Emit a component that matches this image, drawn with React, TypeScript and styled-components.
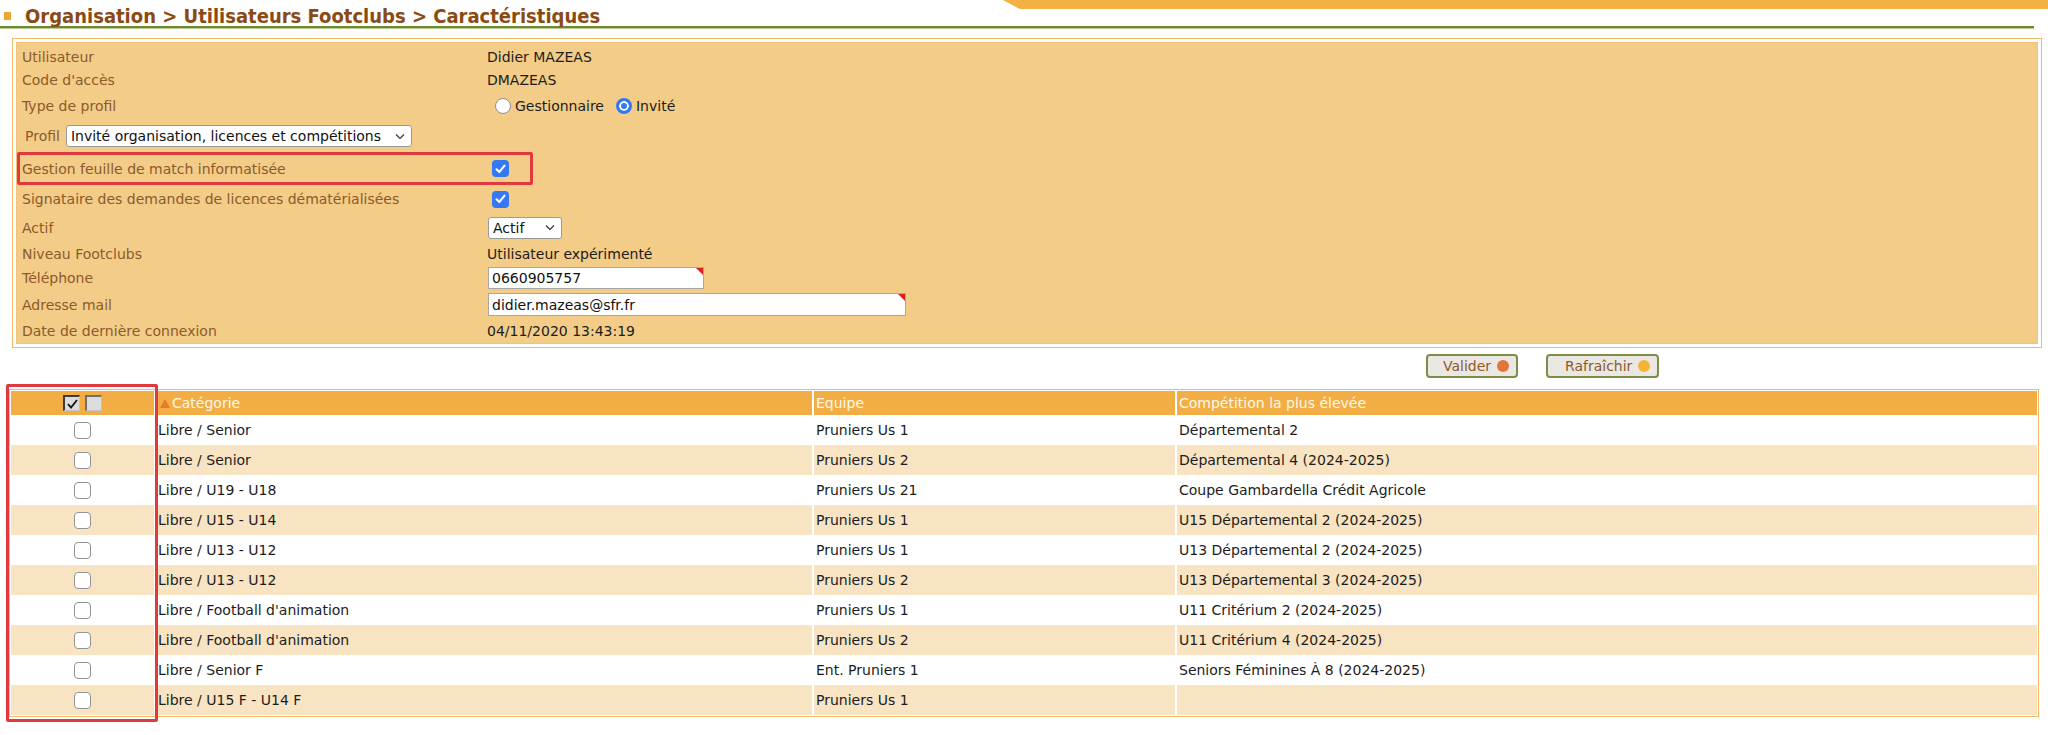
import React from 'react'
import styled, { createGlobalStyle } from 'styled-components'

const GlobalStyle = createGlobalStyle`
  html, body {
    margin: 0;
    padding: 0;
    background: #fff;
  }
  body {
    font-family: "DejaVu Sans", Verdana, sans-serif;
    font-size: 14px;
    color: #1c1c1c;
  }
`

const Page = styled.div`
  width: 2048px;
  height: 735px;
  overflow: hidden;
`

/* ---------- page heading ---------- */

const HeaderBar = styled.div`
  display: flex;
  justify-content: space-between;
  align-items: flex-start;
  height: 26px;
`

const Title = styled.h1`
  margin: 0;
  padding: 6px 0 0 4px;
  display: flex;
  align-items: center;
  font-family: "DejaVu Sans Condensed", "DejaVu Sans", sans-serif;
  font-weight: bold;
  font-size: 20px;
  line-height: 20px;
  color: #8a4a12;
  white-space: nowrap;

  &::before {
    content: '';
    width: 7px;
    height: 8px;
    margin-right: 14px;
    background: #f0a531;
  }
`

const Tab = styled.div`
  width: 1045px;
  height: 9px;
  flex-shrink: 0;
  background: #f2b142;
  clip-path: polygon(0 0, 100% 0, 100% 100%, 17px 100%);
`

const GreenRule = styled.div`
  height: 2px;
  margin-right: 14px;
  background: #6c8a2c;
  border-bottom: 1px solid #bccb94;
`

/* ---------- user panel ---------- */

const Panel = styled.div`
  margin: 9px 6px 0 12px;
  padding: 3px;
  border: 1px solid #f3b868;
  background: #fff;
`

const PanelInner = styled.div`
  padding-top: 2px;
  border: 1px solid #f3c27a;
  background: #f3cc88;
`

const FieldRow = styled.div<{ $h: number }>`
  display: grid;
  grid-template-columns: 470px 1fr;
  align-items: center;
  height: ${p => p.$h}px;
`

const FlaggedRow = styled(FieldRow)`
  box-sizing: border-box;
  width: 516px;
  grid-template-columns: 467px 1fr;
  border: 3px solid #e0393e;
  border-radius: 2px;
`

const Label = styled.span<{ $pad?: number }>`
  padding-left: ${p => p.$pad ?? 5}px;
  color: #8d5a2a;
  white-space: nowrap;
`

const Value = styled.div`
  display: flex;
  align-items: center;
  white-space: nowrap;
`

const ProfileRow = styled.div<{ $h: number }>`
  display: flex;
  align-items: center;
  gap: 6px;
  height: ${p => p.$h}px;
  padding-left: 8px;
`

const SelectBox = styled.div<{ $w: number; $h: number; $ml?: number }>`
  box-sizing: border-box;
  display: flex;
  align-items: center;
  justify-content: space-between;
  width: ${p => p.$w}px;
  height: ${p => p.$h}px;
  margin-left: ${p => p.$ml ?? 0}px;
  padding: 0 6px 0 4px;
  border: 1px solid #9a9a9a;
  border-radius: 3px;
  background: #fff;
  color: #111;
  white-space: nowrap;
`

const TextInput = styled.div<{ $w: number; $h: number }>`
  position: relative;
  box-sizing: border-box;
  display: flex;
  align-items: center;
  width: ${p => p.$w}px;
  height: ${p => p.$h}px;
  margin-left: 1px;
  padding-left: 3px;
  border: 1px solid #a8a8a8;
  background: #fff;
  color: #111;

  &::after {
    content: '';
    position: absolute;
    top: 0;
    right: 0;
    border-top: 7px solid #e02020;
    border-left: 7px solid transparent;
  }
`

const BlueCheck = styled.span`
  display: inline-flex;
  align-items: center;
  justify-content: center;
  width: 17px;
  height: 17px;
  margin-left: 5px;
  border-radius: 4px;
  background: #3479f4;
`

const Radio = styled.span<{ $on?: boolean; $ml: number }>`
  box-sizing: border-box;
  display: inline-block;
  width: 16px;
  height: 16px;
  margin-left: ${p => p.$ml}px;
  margin-right: 4px;
  border-radius: 50%;
  border: ${p => (p.$on ? '3px solid #3479f4' : '1px solid #8f8f8f')};
  background: ${p => (p.$on ? '#3479f4' : '#fff')};
  box-shadow: ${p => (p.$on ? 'inset 0 0 0 2px #fff' : 'none')};
`

const Chevron = () => (
  <svg width="10" height="7" viewBox="0 0 10 7">
    <path d="M1 1.5 L5 5.5 L9 1.5" fill="none" stroke="#333" strokeWidth="1.2" />
  </svg>
)

const Tick = () => (
  <svg width="11" height="10" viewBox="0 0 11 10">
    <path d="M1.5 5.2 L4.3 8 L9.5 1.6" fill="none" stroke="#fff" strokeWidth="2" strokeLinecap="round" strokeLinejoin="round" />
  </svg>
)

/* ---------- action buttons ---------- */

const ButtonBar = styled.div`
  display: flex;
  justify-content: flex-end;
  gap: 28px;
  margin-top: 6px;
  padding-right: 389px;
`

const ActionButton = styled.button<{ $w: number; $pl: number }>`
  box-sizing: border-box;
  display: flex;
  align-items: center;
  gap: 6px;
  width: ${p => p.$w}px;
  height: 24px;
  padding: 0 0 0 ${p => p.$pl}px;
  border: 2px solid #7d8c47;
  border-radius: 4px;
  background: #ebe8e4;
  font: 14px "DejaVu Sans", Verdana, sans-serif;
  color: #8a5a2b;
`

const Dot = styled.span<{ $color: string }>`
  width: 12px;
  height: 12px;
  border-radius: 50%;
  background: ${p => p.$color};
`

/* ---------- teams table ---------- */

const TableWrap = styled.div`
  position: relative;
  margin: 11px 9px 0 9px;
  padding: 1px;
  border: 1px solid #f3b868;
  background: #fff;
`

const Row = styled.div<{ $h: number }>`
  display: grid;
  grid-template-columns: 143px 656px 361px 1fr;
  column-gap: 2px;
  height: ${p => p.$h}px;
`

const HeadCell = styled.div<{ $center?: boolean }>`
  display: flex;
  align-items: center;
  justify-content: ${p => (p.$center ? 'center' : 'flex-start')};
  gap: 5px;
  padding-left: ${p => (p.$center ? 0 : 2)}px;
  background: #f2ae45;
  color: #fff8e8;
  white-space: nowrap;
`

const Cell = styled.div<{ $alt: boolean; $center?: boolean }>`
  display: flex;
  align-items: center;
  justify-content: ${p => (p.$center ? 'center' : 'flex-start')};
  padding-left: ${p => (p.$center ? 0 : 2)}px;
  background: ${p => (p.$alt ? '#f8e3c3' : '#fff')};
  color: #1c1c1c;
  white-space: nowrap;
`

const SortMark = styled.span`
  width: 0;
  height: 0;
  margin-left: 2px;
  margin-right: -3px;
  border-left: 5px solid transparent;
  border-right: 5px solid transparent;
  border-bottom: 9px solid #e77a2c;
`

const BulkBox = styled.span<{ $dark?: boolean }>`
  box-sizing: border-box;
  display: inline-flex;
  align-items: center;
  justify-content: center;
  width: 17px;
  height: 16px;
  border-top: 2px solid ${p => (p.$dark ? '#3c3c3c' : '#707070')};
  border-left: 2px solid ${p => (p.$dark ? '#3c3c3c' : '#707070')};
  border-right: 1px solid #c4c4c4;
  border-bottom: 1px solid #c4c4c4;
  background: #dcdcdc;
`

const RowCheck = styled.span`
  box-sizing: border-box;
  width: 17px;
  height: 17px;
  border: 1px solid #939393;
  border-radius: 4px;
  background: #fff;
`

const Highlight = styled.div`
  position: absolute;
  left: -4px;
  top: -6px;
  width: 152px;
  height: 338px;
  box-sizing: border-box;
  border: 3px solid #e0393e;
  border-radius: 2px;
  pointer-events: none;
`

type Team = { cat: string; team: string; comp: string }

const teams: Team[] = [
  { cat: 'Libre / Senior', team: 'Pruniers Us 1', comp: 'Départemental 2' },
  { cat: 'Libre / Senior', team: 'Pruniers Us 2', comp: 'Départemental 4 (2024-2025)' },
  { cat: 'Libre / U19 - U18', team: 'Pruniers Us 21', comp: 'Coupe Gambardella Crédit Agricole' },
  { cat: 'Libre / U15 - U14', team: 'Pruniers Us 1', comp: 'U15 Départemental 2 (2024-2025)' },
  { cat: 'Libre / U13 - U12', team: 'Pruniers Us 1', comp: 'U13 Départemental 2 (2024-2025)' },
  { cat: 'Libre / U13 - U12', team: 'Pruniers Us 2', comp: 'U13 Départemental 3 (2024-2025)' },
  { cat: "Libre / Football d'animation", team: 'Pruniers Us 1', comp: 'U11 Critérium 2 (2024-2025)' },
  { cat: "Libre / Football d'animation", team: 'Pruniers Us 2', comp: 'U11 Critérium 4 (2024-2025)' },
  { cat: 'Libre / Senior F', team: 'Ent. Pruniers 1', comp: 'Seniors Féminines À 8 (2024-2025)' },
  { cat: 'Libre / U15 F - U14 F', team: 'Pruniers Us 1', comp: '' },
]

const App = () => {
  return (
    <Page>
      <GlobalStyle />

      <HeaderBar>
        <Title>Organisation &gt; Utilisateurs Footclubs &gt; Caractéristiques</Title>
        <Tab />
      </HeaderBar>
      <GreenRule />

      <Panel>
        <PanelInner>
          <FieldRow $h={23}>
            <Label>Utilisateur</Label>
            <Value>Didier MAZEAS</Value>
          </FieldRow>
          <FieldRow $h={24}>
            <Label>Code d'accès</Label>
            <Value>DMAZEAS</Value>
          </FieldRow>
          <FieldRow $h={28}>
            <Label>Type de profil</Label>
            <Value>
              <Radio $ml={8} />
              Gestionnaire
              <Radio $ml={12} $on />
              Invité
            </Value>
          </FieldRow>
          <ProfileRow $h={32}>
            <Label $pad={0}>Profil</Label>
            <SelectBox $w={346} $h={22}>
              <span>Invité organisation, licences et compétitions</span>
              <Chevron />
            </SelectBox>
          </ProfileRow>
          <FlaggedRow $h={33}>
            <Label $pad={2}>Gestion feuille de match informatisée</Label>
            <Value>
              <BlueCheck><Tick /></BlueCheck>
            </Value>
          </FlaggedRow>
          <FieldRow $h={28}>
            <Label>Signataire des demandes de licences dématérialisées</Label>
            <Value>
              <BlueCheck><Tick /></BlueCheck>
            </Value>
          </FieldRow>
          <FieldRow $h={29}>
            <Label>Actif</Label>
            <Value>
              <SelectBox $w={74} $h={22} $ml={1}>
                <span>Actif</span>
                <Chevron />
              </SelectBox>
            </Value>
          </FieldRow>
          <FieldRow $h={23}>
            <Label>Niveau Footclubs</Label>
            <Value>Utilisateur expérimenté</Value>
          </FieldRow>
          <FieldRow $h={26}>
            <Label>Téléphone</Label>
            <Value>
              <TextInput $w={216} $h={22}>0660905757</TextInput>
            </Value>
          </FieldRow>
          <FieldRow $h={27}>
            <Label>Adresse mail</Label>
            <Value>
              <TextInput $w={418} $h={23}>didier.mazeas@sfr.fr</TextInput>
            </Value>
          </FieldRow>
          <FieldRow $h={25}>
            <Label>Date de dernière connexion</Label>
            <Value>04/11/2020 13:43:19</Value>
          </FieldRow>
        </PanelInner>
      </Panel>

      <ButtonBar>
        <ActionButton $w={92} $pl={15}>
          Valider <Dot $color="#e2763a" />
        </ActionButton>
        <ActionButton $w={113} $pl={17}>
          Rafraîchir <Dot $color="#f5b33a" />
        </ActionButton>
      </ButtonBar>

      <TableWrap>
        <Row $h={24}>
          <HeadCell $center>
            <BulkBox $dark>
              <svg width="11" height="10" viewBox="0 0 11 10">
                <path d="M1 5 L4 8.5 L10 1" fill="none" stroke="#111" strokeWidth="1.8" />
              </svg>
            </BulkBox>
            <BulkBox />
          </HeadCell>
          <HeadCell>
            <SortMark />
            Catégorie
          </HeadCell>
          <HeadCell>Equipe</HeadCell>
          <HeadCell>Compétition la plus élevée</HeadCell>
        </Row>
        {teams.map((t, i) => (
          <Row $h={30} key={i}>
            <Cell $alt={i % 2 === 1} $center>
              <RowCheck />
            </Cell>
            <Cell $alt={i % 2 === 1}>{t.cat}</Cell>
            <Cell $alt={i % 2 === 1}>{t.team}</Cell>
            <Cell $alt={i % 2 === 1}>{t.comp}</Cell>
          </Row>
        ))}
        <Highlight />
      </TableWrap>
    </Page>
  )
}

export default App
